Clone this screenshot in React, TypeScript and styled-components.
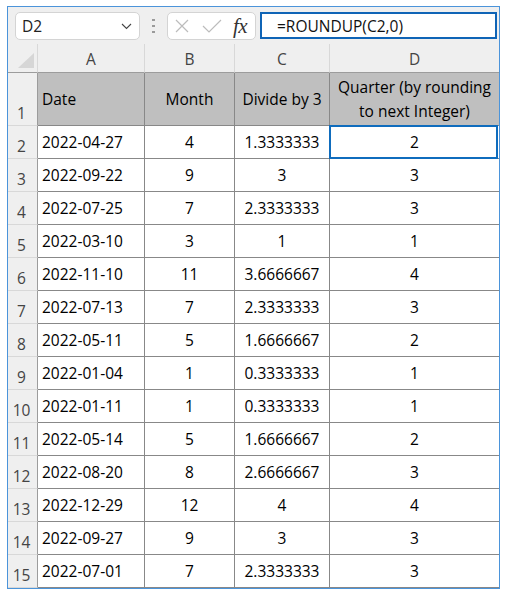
import React from 'react'
import styled, { createGlobalStyle } from 'styled-components'

const GlobalStyle = createGlobalStyle`
  * {
    box-sizing: border-box;
  }
  body {
    margin: 0;
    background: #ffffff;
    font-family: 'Open Sans', 'Noto Sans', sans-serif;
  }
`

const rows: [string, number, string, number][] = [
  ['2022-04-27', 4, '1.3333333', 2],
  ['2022-09-22', 9, '3', 3],
  ['2022-07-25', 7, '2.3333333', 3],
  ['2022-03-10', 3, '1', 1],
  ['2022-11-10', 11, '3.6666667', 4],
  ['2022-07-13', 7, '2.3333333', 3],
  ['2022-05-11', 5, '1.6666667', 2],
  ['2022-01-04', 1, '0.3333333', 1],
  ['2022-01-11', 1, '0.3333333', 1],
  ['2022-05-14', 5, '1.6666667', 2],
  ['2022-08-20', 8, '2.6666667', 3],
  ['2022-12-29', 12, '4', 4],
  ['2022-09-27', 9, '3', 3],
  ['2022-07-01', 7, '2.3333333', 3],
]

const columns = ['A', 'B', 'C', 'D']

const App: React.FC = () => {
  return (
    <>
      <GlobalStyle />
      <Frame>
        <Toolbar>
          <NameBox>
            <span>D2</span>
            <svg width="11" height="7" viewBox="0 0 11 7">
              <path d="M1 1 L5.5 5.5 L10 1" fill="none" stroke="#444" strokeWidth="1.1" />
            </svg>
          </NameBox>
          <Grip>
            <Dot />
            <Dot />
            <Dot />
          </Grip>
          <FxBox>
            <svg width="14" height="14" viewBox="0 0 14 14">
              <path d="M1 1 L13 13 M13 1 L1 13" stroke="#bcbcbc" strokeWidth="1.2" fill="none" />
            </svg>
            <svg width="20" height="14" viewBox="0 0 20 14">
              <path d="M1 7 L7 13 L19 1" stroke="#bcbcbc" strokeWidth="1.2" fill="none" />
            </svg>
            <FxLabel>fx</FxLabel>
          </FxBox>
          <FormulaBox>=ROUNDUP(C2,0)</FormulaBox>
        </Toolbar>
        <Sheet>
          <Corner>
            <svg width="16" height="15" viewBox="0 0 16 15">
              <polygon points="16,0 16,15 0,15" fill="#d6d6d6" />
            </svg>
          </Corner>
          {columns.map((c, i) => (
            <ColHead key={c} $last={i === columns.length - 1}>
              {c}
            </ColHead>
          ))}

          <RowHead>1</RowHead>
          <Cell $header $align="left">Date</Cell>
          <Cell $header>Month</Cell>
          <Cell $header>Divide by 3</Cell>
          <Cell $header $last>
            Quarter (by rounding
            <br />
            to next Integer)
          </Cell>

          {rows.map((r, i) => (
            <React.Fragment key={i}>
              <RowHead>{i + 2}</RowHead>
              <Cell $align="left">{r[0]}</Cell>
              <Cell>{r[1]}</Cell>
              <Cell>{r[2]}</Cell>
              <Cell $last $selected={i === 0}>
                {r[3]}
              </Cell>
            </React.Fragment>
          ))}
        </Sheet>
      </Frame>
    </>
  )
}

const Frame = styled.div`
  width: 493px;
  margin: 6px 0 0 7px;
  border: 1px solid #4b94da;
  background: #efefef;
`

const Toolbar = styled.div`
  display: flex;
  align-items: flex-start;
  height: 37px;
  padding: 5px 1px 0 7px;
  background: #efefef;
`

const NameBox = styled.div`
  display: flex;
  align-items: center;
  justify-content: space-between;
  width: 125px;
  height: 28px;
  padding: 0 7px 0 6px;
  background: #ffffff;
  border: 1px solid #d4d4d4;
  border-radius: 5px;
  font-size: 15.5px;
  color: #222;
`

const Grip = styled.div`
  display: flex;
  flex-direction: column;
  align-items: center;
  justify-content: center;
  gap: 4px;
  width: 27px;
  height: 28px;
`

const Dot = styled.span`
  width: 3px;
  height: 2px;
  background: #9a9a9a;
`

const FxBox = styled.div`
  display: flex;
  align-items: center;
  gap: 13px;
  width: 89px;
  height: 28px;
  padding: 0 0 0 7px;
  background: #ffffff;
  border: 1px solid #d4d4d4;
  border-radius: 5px;
`

const FxLabel = styled.span`
  font-family: 'Liberation Serif', 'DejaVu Serif', serif;
  font-style: italic;
  font-size: 21px;
  color: #333;
  letter-spacing: -0.5px;
  margin-left: -2px;
`

const FormulaBox = styled.div`
  display: flex;
  align-items: center;
  width: 237px;
  height: 27px;
  margin-left: 4px;
  padding-left: 15px;
  background: #ffffff;
  border: 2px solid #0f64b6;
  font-size: 15.5px;
  color: #111;
`

const Sheet = styled.div`
  display: grid;
  grid-template-columns: 30px 107px 90px 95px 169px;
  grid-template-rows: 29px 53px repeat(14, 33px);
  background: #ffffff;
`

const Corner = styled.div`
  display: flex;
  align-items: flex-end;
  justify-content: flex-end;
  padding: 0 3px 4px 0;
  background: #efefef;
  border-right: 1px solid #d8d8d8;
  border-bottom: 1px solid #9c9c9c;
`

const ColHead = styled.div<{ $last?: boolean }>`
  display: flex;
  align-items: center;
  justify-content: center;
  padding-top: 2px;
  background: #efefef;
  border-right: ${(p) => (p.$last ? 'none' : '1px solid #d8d8d8')};
  border-bottom: 1px solid #9c9c9c;
  font-size: 15.5px;
  color: #444;
`

const RowHead = styled.div`
  display: flex;
  align-items: flex-end;
  justify-content: center;
  padding: 0 2px 1px 0;
  background: #efefef;
  border-right: 1px solid #9c9c9c;
  border-bottom: 1px solid #d8d8d8;
  font-size: 15.5px;
  color: #444;
`

const Cell = styled.div<{
  $header?: boolean
  $last?: boolean
  $align?: 'left' | 'center'
  $selected?: boolean
}>`
  position: relative;
  display: flex;
  align-items: center;
  justify-content: ${(p) => (p.$align === 'left' ? 'flex-start' : 'center')};
  text-align: center;
  padding: 0 4px;
  background: ${(p) => (p.$header ? '#bfbfbf' : '#ffffff')};
  border-right: ${(p) => (p.$last ? 'none' : '1px solid #888888')};
  border-bottom: 1px solid #888888;
  font-size: 15.5px;
  line-height: 24px;
  color: #000;

  ${(p) =>
    p.$selected &&
    `
    &::after {
      content: '';
      position: absolute;
      top: -1px;
      left: -1px;
      right: 1px;
      bottom: -1px;
      border: 2px solid #0f6cbd;
    }
  `}
`

export default App
